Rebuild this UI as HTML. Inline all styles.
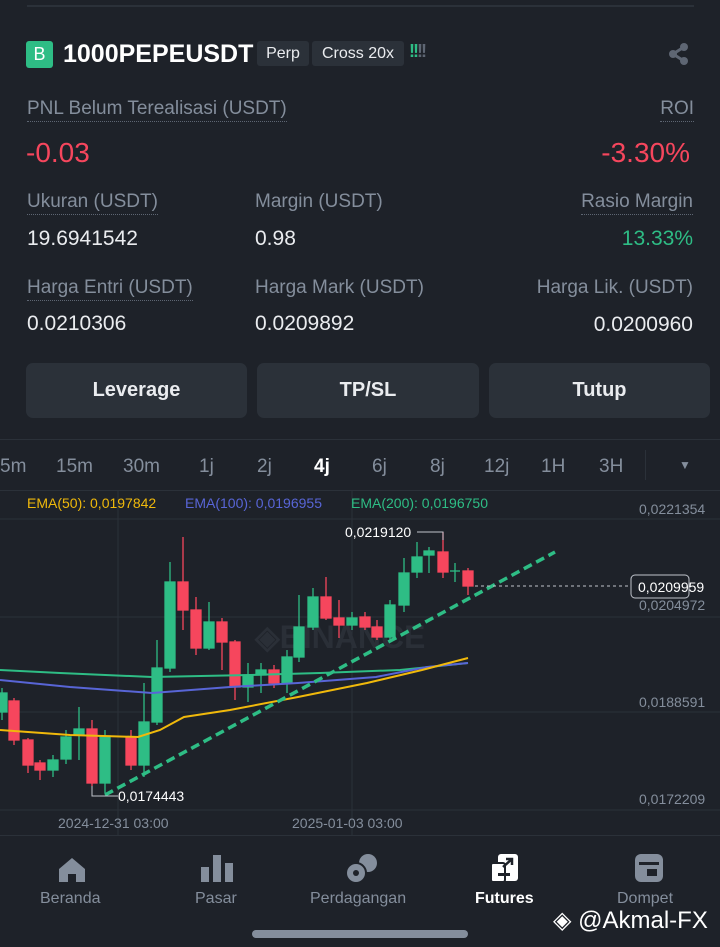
<!DOCTYPE html>
<html><head><meta charset="utf-8"><style>
*{margin:0;padding:0;box-sizing:border-box}
body{width:720px;height:947px;background:#1e2229;font-family:"Liberation Sans",sans-serif;position:relative;overflow:hidden;color:#eaecef}
.a{position:absolute;white-space:nowrap}
.lbl{color:#848e9c;font-size:19px;border-bottom:1px dotted #5e6673;padding-bottom:1px}
.val{color:#eaecef;font-size:21px}
.btn{position:absolute;top:363px;height:55px;background:#2b3139;border-radius:7px;color:#eaecef;font-size:20px;font-weight:bold;text-align:center;line-height:55px}
.tf{position:absolute;top:456px;font-size:19px;color:#848e9c}
.nav{position:absolute;top:890px;font-size:16px;color:#848e9c;text-align:center}
.ax{position:absolute;font-size:14px;color:#848e9c}
</style></head><body>
<div class="a" style="left:27px;top:5px;width:667px;height:2px;background:#2b3139"></div>
<div class="a" style="left:26px;top:41px;width:27px;height:27px;background:#2ebd85;border-radius:3px;color:#fff;font-size:18px;text-align:center;line-height:27px">B</div>
<div class="a" style="left:63px;top:40px;font-size:25px;font-weight:bold;color:#fff">1000PEPEUSDT</div>
<div class="a" style="left:257px;top:41px;width:52px;height:25px;background:#2b3139;border-radius:3px;font-size:16px;text-align:center;line-height:25px">Perp</div>
<div class="a" style="left:312px;top:41px;width:92px;height:25px;background:#2b3139;border-radius:3px;font-size:16px;text-align:center;line-height:25px">Cross 20x</div>
<div class="a" style="left:409px;top:41px;font-size:18px;font-weight:bold;letter-spacing:-2px;color:#2ebd85">!!<span style="color:#5e6673">!!</span></div>
<svg class="a" style="left:668px;top:42px" width="22" height="24" viewBox="0 0 22 24"><circle cx="16" cy="5" r="4" fill="#5e6673"/><circle cx="5" cy="12" r="4" fill="#5e6673"/><circle cx="16" cy="19" r="4" fill="#5e6673"/><path d="M16 5L5 12L16 19" stroke="#5e6673" stroke-width="3" fill="none"/></svg>

<div class="a lbl" style="left:27px;top:98px">PNL Belum Terealisasi (USDT)</div>
<div class="a lbl" style="right:26px;top:98px">ROI</div>
<div class="a" style="left:26px;top:137px;font-size:28px;color:#f6465d">-0.03</div>
<div class="a" style="right:30px;top:137px;font-size:28px;color:#f6465d">-3.30%</div>

<div class="a lbl" style="left:27px;top:191px">Ukuran (USDT)</div>
<div class="a lbl" style="left:255px;top:191px;border:none">Margin (USDT)</div>
<div class="a lbl" style="right:27px;top:191px">Rasio Margin</div>
<div class="a val" style="left:27px;top:227px">19.6941542</div>
<div class="a val" style="left:255px;top:227px">0.98</div>
<div class="a val" style="right:27px;top:227px;color:#2ebd85">13.33%</div>

<div class="a lbl" style="left:27px;top:277px">Harga Entri (USDT)</div>
<div class="a lbl" style="left:255px;top:277px;border:none">Harga Mark (USDT)</div>
<div class="a lbl" style="right:27px;top:277px;border:none">Harga Lik. (USDT)</div>
<div class="a val" style="left:27px;top:312px">0.0210306</div>
<div class="a val" style="left:255px;top:312px">0.0209892</div>
<div class="a val" style="right:27px;top:313px">0.0200960</div>

<div class="btn" style="left:26px;width:221px">Leverage</div>
<div class="btn" style="left:257px;width:222px">TP/SL</div>
<div class="btn" style="left:489px;width:221px">Tutup</div>

<div class="a" style="left:0;top:439px;width:720px;height:1px;background:#2b3139"></div>
<div class="tf" style="left:0">5m</div><div class="tf" style="left:56px">15m</div><div class="tf" style="left:123px">30m</div><div class="tf" style="left:199px">1j</div><div class="tf" style="left:257px">2j</div><div class="tf" style="left:314px;color:#fff;font-weight:bold">4j</div><div class="tf" style="left:372px">6j</div><div class="tf" style="left:430px">8j</div><div class="tf" style="left:484px">12j</div><div class="tf" style="left:541px">1H</div><div class="tf" style="left:599px">3H</div>
<div class="a" style="left:645px;top:450px;width:1px;height:30px;background:#2b3139"></div>
<div class="a" style="left:679px;top:458px;font-size:12px;color:#848e9c">▼</div>
<div class="a" style="left:0;top:490px;width:720px;height:1px;background:#2b3139"></div>

<svg class="a" style="left:0;top:490px" width="720" height="345" viewBox="0 490 720 345">
<g stroke="#2b3139" stroke-width="1"><line x1="0" y1="519" x2="720" y2="519"/><line x1="0" y1="617" x2="720" y2="617"/><line x1="0" y1="712" x2="720" y2="712"/><line x1="0" y1="810" x2="720" y2="810"/><line x1="118" y1="490" x2="118" y2="835"/><line x1="352" y1="490" x2="352" y2="835"/></g>
<text x="255" y="648" font-size="32" font-weight="bold" fill="#2a2f37" font-family="Liberation Sans">◈BINANCE</text>
<g stroke-width="1.3">
<g stroke="#2ebd85" fill="#2ebd85">
<line x1="2" y1="688" x2="2" y2="720"/><rect x="-3" y="693" width="10" height="19"/>
<line x1="53" y1="755" x2="53" y2="777"/><rect x="48" y="760" width="10" height="10"/>
<line x1="66" y1="730" x2="66" y2="764"/><rect x="61" y="737" width="10" height="22"/>
<line x1="79" y1="707" x2="79" y2="760"/><rect x="74" y="729" width="10" height="6"/>
<line x1="105" y1="730" x2="105" y2="793"/><rect x="100" y="736" width="10" height="47"/>
<line x1="144" y1="683" x2="144" y2="777"/><rect x="139" y="722" width="10" height="43"/>
<line x1="157" y1="640" x2="157" y2="725"/><rect x="152" y="668" width="10" height="54"/>
<line x1="170" y1="562" x2="170" y2="672"/><rect x="165" y="582" width="10" height="86"/>
<line x1="209" y1="602" x2="209" y2="650"/><rect x="204" y="622" width="10" height="26"/>
<line x1="248" y1="663" x2="248" y2="702"/><rect x="243" y="675" width="10" height="12"/>
<line x1="261" y1="663" x2="261" y2="693"/><rect x="256" y="670" width="10" height="5"/>
<line x1="287" y1="650" x2="287" y2="693"/><rect x="282" y="657" width="10" height="26"/>
<line x1="299" y1="595" x2="299" y2="662"/><rect x="294" y="627" width="10" height="30"/>
<line x1="313" y1="588" x2="313" y2="630"/><rect x="308" y="597" width="10" height="30"/>
<line x1="352" y1="612" x2="352" y2="630"/><rect x="347" y="618" width="10" height="7"/>
<line x1="390" y1="600" x2="390" y2="640"/><rect x="385" y="605" width="10" height="32"/>
<line x1="404" y1="558" x2="404" y2="612"/><rect x="399" y="573" width="10" height="32"/>
<line x1="417" y1="542" x2="417" y2="578"/><rect x="412" y="557" width="10" height="15"/>
<line x1="429" y1="547" x2="429" y2="573"/><rect x="424" y="551" width="10" height="4"/>
<line x1="455" y1="563" x2="455" y2="582"/><line x1="450" y1="571" x2="460" y2="571"/>
</g>
<g stroke="#f6465d" fill="#f6465d">
<line x1="14" y1="698" x2="14" y2="745"/><rect x="9" y="701" width="10" height="39"/>
<line x1="28" y1="738" x2="28" y2="773"/><rect x="23" y="740" width="10" height="25"/>
<line x1="40" y1="760" x2="40" y2="780"/><rect x="35" y="763" width="10" height="7"/>
<line x1="92" y1="720" x2="92" y2="786"/><rect x="87" y="729" width="10" height="54"/>
<line x1="131" y1="730" x2="131" y2="770"/><rect x="126" y="737" width="10" height="28"/>
<line x1="183" y1="537" x2="183" y2="630"/><rect x="178" y="582" width="10" height="28"/>
<line x1="196" y1="597" x2="196" y2="655"/><rect x="191" y="610" width="10" height="38"/>
<line x1="222" y1="618" x2="222" y2="670"/><rect x="217" y="622" width="10" height="20"/>
<line x1="235" y1="640" x2="235" y2="700"/><rect x="230" y="642" width="10" height="45"/>
<line x1="274" y1="665" x2="274" y2="688"/><rect x="269" y="670" width="10" height="13"/>
<line x1="326" y1="577" x2="326" y2="620"/><rect x="321" y="597" width="10" height="21"/>
<line x1="339" y1="600" x2="339" y2="638"/><rect x="334" y="618" width="10" height="7"/>
<line x1="365" y1="612" x2="365" y2="630"/><rect x="360" y="617" width="10" height="10"/>
<line x1="377" y1="620" x2="377" y2="640"/><rect x="372" y="627" width="10" height="10"/>
<line x1="443" y1="532" x2="443" y2="578"/><rect x="438" y="552" width="10" height="20"/>
<line x1="468" y1="568" x2="468" y2="595"/><rect x="463" y="571" width="10" height="15"/>
</g></g>
<polyline fill="none" stroke="#2ebd85" stroke-width="2" points="0,670 60,673 152,677 250,675 320,673 400,670 468,663"/>
<polyline fill="none" stroke="#5865d6" stroke-width="2" points="0,680 70,687 152,693 230,687 298,683 376,677 427,667 468,663"/>
<polyline fill="none" stroke="#f0b90b" stroke-width="2" points="0,730 70,735 138,737 160,730 184,717 230,710 298,697 367,683 422,670 468,658"/>
<line x1="105" y1="795" x2="555" y2="552" stroke="#2ebd85" stroke-width="3.5" stroke-dasharray="9 5"/>
<line x1="475" y1="586" x2="630" y2="586" stroke="#c0c4cc" stroke-width="1" stroke-dasharray="3 3"/>
<rect x="631" y="575" width="58" height="23" rx="4" fill="#1e2229" stroke="#c0c4cc"/>
<text x="638" y="592" font-size="14" fill="#fff" font-family="Liberation Sans">0,0209959</text>
<polyline fill="none" stroke="#c0c4cc" points="92,786 92,796 118,796"/>
<text x="118" y="801" font-size="14" fill="#fff" font-family="Liberation Sans">0,0174443</text>
<polyline fill="none" stroke="#c0c4cc" points="417,532 443,532 443,540"/>
<text x="345" y="537" font-size="14" fill="#fff" font-family="Liberation Sans">0,0219120</text>
</svg>
<div class="a" style="left:27px;top:495px;font-size:14px;color:#f0b90b">EMA(50): 0,0197842</div>
<div class="a" style="left:185px;top:495px;font-size:14px;color:#5865d6">EMA(100): 0,0196955</div>
<div class="a" style="left:351px;top:495px;font-size:14px;color:#2ebd85">EMA(200): 0,0196750</div>
<div class="ax" style="left:639px;top:501px">0,0221354</div>
<div class="ax" style="left:639px;top:597px">0,0204972</div>
<div class="ax" style="left:639px;top:694px">0,0188591</div>
<div class="ax" style="left:639px;top:791px">0,0172209</div>
<div class="ax" style="left:58px;top:815px">2024-12-31 03:00</div>
<div class="ax" style="left:292px;top:815px">2025-01-03 03:00</div>
<div class="a" style="left:0;top:835px;width:720px;height:1px;background:#2b3139"></div>

<svg class="a" style="left:57px;top:857px" width="30" height="26" viewBox="0 0 30 26"><path d="M15 1L28 12V25H19V17H11V25H2V12Z" fill="#848e9c"/></svg>
<svg class="a" style="left:201px;top:855px" width="32" height="28" viewBox="0 0 32 28"><rect x="0" y="12" width="8" height="15" fill="#848e9c"/><rect x="12" y="0" width="8" height="27" fill="#848e9c"/><rect x="24" y="8" width="8" height="19" fill="#848e9c"/></svg>
<svg class="a" style="left:344px;top:852px" width="34" height="32" viewBox="0 0 34 32"><circle cx="24" cy="11" r="9" fill="#848e9c"/><circle cx="12" cy="21" r="10" fill="#848e9c" stroke="#1e2229" stroke-width="2"/><circle cx="12" cy="21" r="3" fill="#1e2229"/></svg>
<svg class="a" style="left:490px;top:853px" width="30" height="30" viewBox="0 0 30 30"><rect x="8" y="1" width="20" height="27" rx="3" fill="#fff"/><rect x="1" y="10" width="14" height="19" rx="2" fill="#fff" stroke="#1e2229" stroke-width="2"/><path d="M13 14L22 6M16 6H22V12" stroke="#1e2229" stroke-width="2.5" fill="none"/><rect x="8" y="20" width="12" height="3" fill="#1e2229"/></svg>
<svg class="a" style="left:634px;top:853px" width="30" height="30" viewBox="0 0 30 30"><rect x="1" y="1" width="28" height="28" rx="6" fill="#848e9c"/><rect x="5" y="9" width="20" height="3" fill="#1e2229"/><rect x="13" y="16" width="10" height="7" fill="#1e2229"/></svg>
<div class="nav" style="left:40px">Beranda</div>
<div class="nav" style="left:195px">Pasar</div>
<div class="nav" style="left:310px">Perdagangan</div>
<div class="nav" style="left:475px;color:#fff;font-weight:bold">Futures</div>
<div class="nav" style="left:617px">Dompet</div>
<div class="a" style="left:553px;top:906px;font-size:24px;color:#fff">◈ @Akmal-FX</div>
<div class="a" style="left:252px;top:930px;width:216px;height:8px;border-radius:4px;background:#848e9c"></div>
</body></html>
